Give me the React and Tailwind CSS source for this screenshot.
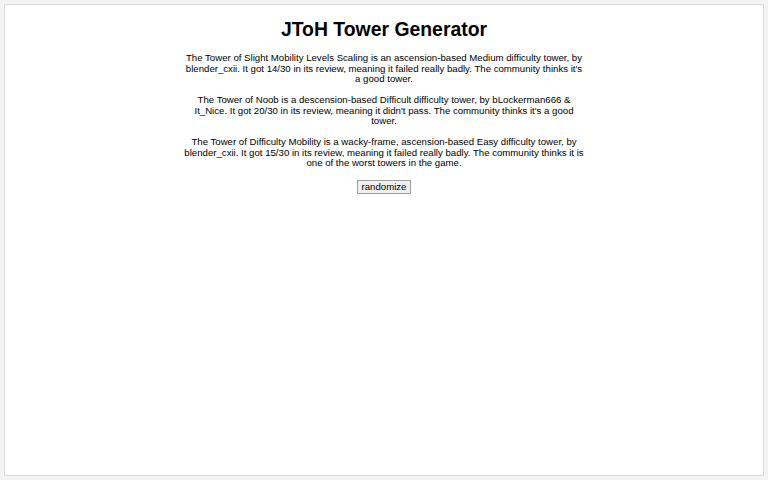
import React, { useState } from "react";

const towers = [
  "The Tower of Slight Mobility Levels Scaling is an ascension-based Medium difficulty tower, by blender_cxii. It got 14/30 in its review, meaning it failed really badly. The community thinks it's a good tower.",
  "The Tower of Noob is a descension-based Difficult difficulty tower, by bLockerman666 & It_Nice. It got 20/30 in its review, meaning it didn't pass. The community thinks it's a good tower.",
  "The Tower of Difficulty Mobility is a wacky-frame, ascension-based Easy difficulty tower, by blender_cxii. It got 15/30 in its review, meaning it failed really badly. The community thinks it is one of the worst towers in the game.",
];

export default function App() {
  const [list] = useState(towers);

  return (
    <div className="h-[480px] bg-[#f3f3f3] p-[4px] font-['Liberation_Sans',Arial,sans-serif] text-black">
      <div className="flex h-full flex-col items-center border border-[#dcdcdc] bg-white">
        <h1 className="mt-[13px] text-[19.4px] font-bold leading-[22px]">
          JToH Tower Generator
        </h1>
        <div className="mt-[13px] w-[400px]">
          {list.map((t, i) => (
            <p key={i} className="mb-[10.5px] text-center text-[9.65px] leading-[10.5px]">
              {t}
            </p>
          ))}
        </div>
        <button className="mt-[1px] border border-[#a0a0a0] bg-[#efefef] px-[4px] text-[9.65px] leading-[12px]">
          randomize
        </button>
      </div>
    </div>
  );
}
